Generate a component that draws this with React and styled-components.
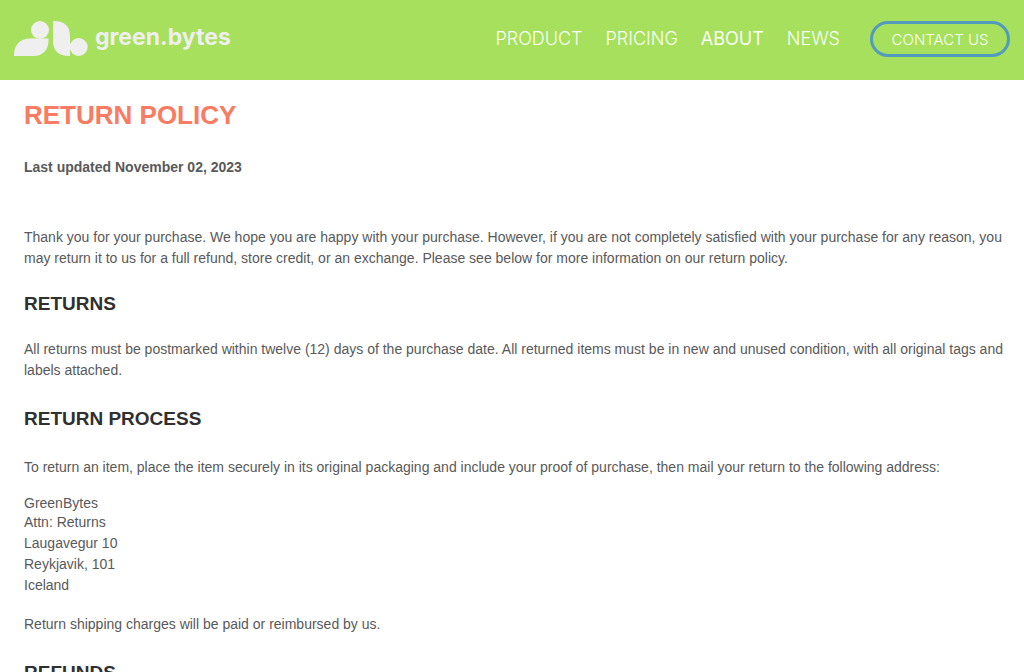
import React from 'react';
import styled, { createGlobalStyle } from 'styled-components';

const GlobalStyle = createGlobalStyle`
    body {
        margin: 0;
        background: #fff;
        color: #595959;
        font-family: Arial, 'Liberation Sans', Helvetica, sans-serif;
        font-size: 14px;
        line-height: 21px;
    }
`;

const Header = styled.header`
    min-height: 80px;
    box-sizing: border-box;
    padding: 0 14px 2px;
    display: flex;
    align-items: center;
    justify-content: space-between;
    background: #a6e05c;
    font-family: Inter, 'Liberation Sans', sans-serif;
    @media(max-width: 800px) {
        flex-wrap: wrap;
    }
`;

const Logo = styled.a`
    display: flex;
    align-items: center;
    gap: 6px;
    color: #efefef;
    text-decoration: none;
`;

const LogoMark = styled.svg`
    width: 75px;
    height: 36px;
    fill: currentColor;
`;

const LogoText = styled.span`
    font-size: 23px;
    line-height: 32px;
    padding-bottom: 4px;
    font-weight: 700;
`;

const Nav = styled.nav`
    display: flex;
    align-items: center;
    gap: 23px;
    @media(max-width: 800px) {
        flex-wrap: wrap;
    }
`;

const NavLink = styled.a`
    color: #fbfff4;
    font-size: 18px;
    line-height: 24px;
    font-weight: ${props => props.$active ? 400 : 300};
    text-decoration: none;
`;

const ContactButton = styled.button`
    width: 140px;
    height: 36px;
    margin-left: 7px;
    padding: 0;
    border: 3px solid #539bbd;
    border-radius: 18px;
    background: transparent;
    color: #fbfff4;
    font-family: inherit;
    font-size: 15px;
    font-weight: 300;
    cursor: pointer;
`;

const Policy = styled.main`
    padding: 16px 20px 16px 24px;
`;

const Title = styled.h1`
    margin: 0 0 23px;
    color: #f97b61;
    font-size: 26px;
    line-height: 38px;
`;

const Updated = styled.p`
    margin: 0 0 49px;
    font-weight: bold;
`;

const SectionTitle = styled.h2`
    margin: ${props => props.$spaced ? '24px' : '21px'} 0;
    color: #303030;
    font-size: 19px;
    line-height: 28px;
`;

const Text = styled.p`
    margin: 16px 0;
`;

const Address = styled.address`
    margin: 16px 0 18px;
    font-style: normal;
`;

const AddressName = styled.div`
    line-height: 18px;
`;

const LINKS = ['PRODUCT', 'PRICING', 'ABOUT', 'NEWS'];

const ADDRESS_LINES = ['Attn: Returns', 'Laugavegur 10', 'Reykjavik, 101', 'Iceland'];

const App = () => (
    <>
        <GlobalStyle />
        <Header>
            <Logo href='#home'>
                <LogoMark viewBox='0 0 75 36' aria-hidden='true'>
                    <circle cx='26' cy='9' r='9' />
                    <path d='M0 35V34C0 24 6 17.5 16 17.5H34.5V19C34.5 29 29 35 19 35Z' />
                    <path d='M39 0H40C50 0 56 5 56 15V35H55C45 35 39 30 39 20Z' />
                    <circle cx='64.7' cy='26' r='9' />
                </LogoMark>
                <LogoText>green.bytes</LogoText>
            </Logo>
            <Nav>
                {LINKS.map(item => (
                    <NavLink key={item} href={`#${item.toLowerCase()}`} $active={item === 'ABOUT'}>
                        {item}
                    </NavLink>
                ))}
                <ContactButton type='button'>CONTACT US</ContactButton>
            </Nav>
        </Header>

        <Policy>
            <Title>RETURN POLICY</Title>
            <Updated>Last updated November 02, 2023</Updated>
            <Text>
                Thank you for your purchase. We hope you are happy with your purchase. However, if you are not
                completely satisfied with your purchase for any reason, you may return it to us for a full refund,
                store credit, or an exchange. Please see below for more information on our return policy.
            </Text>

            <SectionTitle>RETURNS</SectionTitle>
            <Text>
                All returns must be postmarked within twelve (12) days of the purchase date. All returned items
                must be in new and unused condition, with all original tags and labels attached.
            </Text>

            <SectionTitle $spaced>RETURN PROCESS</SectionTitle>
            <Text>
                To return an item, place the item securely in its original packaging and include your proof of
                purchase, then mail your return to the following address:
            </Text>
            <Address>
                <AddressName>GreenBytes</AddressName>
                {ADDRESS_LINES.map(line => <div key={line}>{line}</div>)}
            </Address>
            <Text>Return shipping charges will be paid or reimbursed by us.</Text>

            <SectionTitle $spaced>REFUNDS</SectionTitle>
        </Policy>
    </>
);

export default App;
